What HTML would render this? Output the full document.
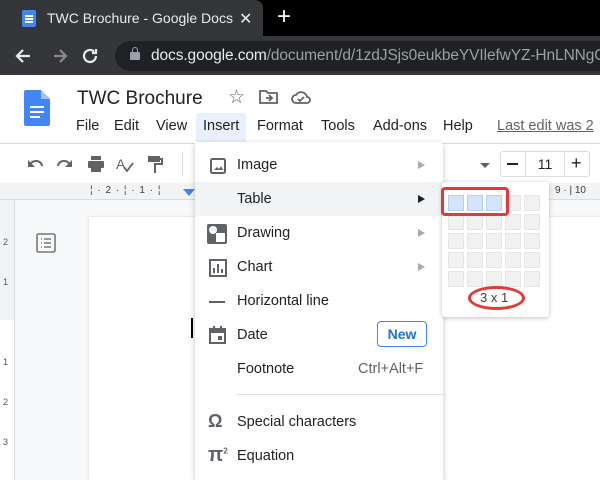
<!DOCTYPE html>
<html><head><style>
*{margin:0;padding:0;box-sizing:border-box}
html,body{width:600px;height:480px;overflow:hidden}
body{position:relative;font-family:"Liberation Sans",Arial,sans-serif;background:#fff}
#w{position:absolute;left:0;top:0;width:600px;height:480px;overflow:hidden}
.a{position:absolute}
.mi{position:absolute;left:0;width:248px;height:34px;font-size:14.5px;color:#202124}
.mi .t{position:absolute;left:42px;top:9px}
.mi .ar{position:absolute;left:223px;top:13px;width:0;height:0;border-left:7px solid #aaa;border-top:4.5px solid transparent;border-bottom:4.5px solid transparent}
.cell{position:absolute;width:16px;height:16px;background:#f1f1f1;border:1px solid #e6e6e6}
.cell.s{background:#d6e4fb;border-color:#b8cff5}
</style></head><body><div id="w">
<!-- tab bar -->
<div class="a" style="left:0;top:0;width:600px;height:36px;background:#000"></div>
<div class="a" style="left:0;top:0;width:263px;height:36px;background:#35363a;border-radius:0 8px 0 0"></div>
<div class="a" style="left:22px;top:10px;width:14px;height:17px;background:#4285f4;border-radius:2px"></div>
<div class="a" style="left:25px;top:15px;width:8px;height:1.5px;background:#fff;box-shadow:0 3px #fff,0 6px #fff"></div>
<div class="a" style="left:47px;top:10px;font-size:14px;color:#e8eaed;white-space:nowrap">TWC Brochure - Google Docs</div>
<div class="a" style="left:239px;top:9px;font-size:16px;color:#e8eaed">✕</div>
<div class="a" style="left:277px;top:3px;font-size:24px;color:#fff">+</div>
<!-- address row -->
<div class="a" style="left:0;top:36px;width:600px;height:39px;background:#35363a"></div>
<div class="a" style="left:115px;top:41px;width:485px;height:30px;background:#202124;border-radius:15px 0 0 15px;overflow:hidden">
<div class="a" style="left:15px;top:11px;width:10px;height:8px;background:#9aa0a6;border-radius:1px"></div>
<div class="a" style="left:17px;top:6px;width:6px;height:7px;border:1.5px solid #9aa0a6;border-bottom:none;border-radius:3px 3px 0 0"></div>
<div class="a" style="left:36px;top:6px;font-size:15.5px;color:#9aa0a6;white-space:nowrap;letter-spacing:-0.1px"><span style="color:#e8eaed">docs.google.com</span>/document/d/1zdJSjs0eukbeYVIlefwYZ-HnLNNgOkc</div>
</div>
<svg class="a" style="left:10px;top:44px" width="90" height="24" viewBox="0 0 90 24" fill="none" stroke-width="2.2">
<path d="M20 12H7M13 6L7 12l6 6" stroke="#e8eaed"/>
<path d="M44 12h12M50 6l6 6-6 6" stroke="#888"/>
<path d="M86 12a6 6 0 1 1-2-4.5" stroke="#e8eaed"/><path d="M86 5v4h-4" stroke="#e8eaed"/>
</svg>
<!-- docs header -->
<svg class="a" style="left:24px;top:90px" width="26" height="36" viewBox="0 0 26 36"><path d="M2 0h15l9 9v25a2 2 0 0 1-2 2H2a2 2 0 0 1-2-2V2a2 2 0 0 1 2-2z" fill="#4285f4"/><path d="M17 0v9h9z" fill="#a1c2fa"/><path d="M6 17h14M6 22h14M6 27h10" stroke="#fff" stroke-width="2"/></svg>
<div class="a" style="left:77px;top:88px;font-size:19px;color:#202124">TWC Brochure</div>
<div class="a" style="left:228px;top:86px;font-size:19px;color:#5f6368">☆</div>
<svg class="a" style="left:259px;top:89px" width="20" height="16" viewBox="0 0 20 16" fill="none" stroke="#5f6368" stroke-width="1.8"><path d="M1 2h6l2 2h9v10H1z"/><path d="M7 9h6M10 6l3 3-3 3"/></svg>
<svg class="a" style="left:291px;top:89px" width="20" height="16" viewBox="0 0 20 16" fill="none" stroke="#5f6368" stroke-width="1.8"><path d="M5 14a4 4 0 0 1 0-8 6 6 0 0 1 11 2 3 3 0 0 1 0 6z"/><path d="M7 10l2 2 4-4"/></svg>
<div class="a" style="left:196px;top:113px;width:50px;height:30px;background:#e8f0fe;border-radius:3px 3px 0 0"></div>
<div class="a" style="left:76px;top:118px;width:524px;height:20px;overflow:hidden;font-size:14.5px;color:#202124;white-space:nowrap">
<span style="position:absolute;left:0">File</span><span style="position:absolute;left:38px">Edit</span><span style="position:absolute;left:80px">View</span><span style="position:absolute;left:127px">Insert</span><span style="position:absolute;left:181px">Format</span><span style="position:absolute;left:245px">Tools</span><span style="position:absolute;left:297px">Add-ons</span><span style="position:absolute;left:367px">Help</span><span style="position:absolute;left:421px;color:#5f6368;text-decoration:underline">Last edit was 2</span></div>
<div class="a" style="left:0;top:143px;width:600px;height:1px;background:#dadce0"></div>
<!-- toolbar icons -->
<svg class="a" style="left:26px;top:154px" width="150" height="20" viewBox="0 0 150 20" fill="#5f6368" stroke="#5f6368">
<path d="M4 12a6 5 0 0 1 12 0" fill="none" stroke-width="2"/><path d="M2 6v7h7z" stroke="none"/>
<path d="M44 12a6 5 0 0 0-12 0" fill="none" stroke-width="2"/><path d="M46 6v7h-7z" stroke="none"/>
<rect x="62" y="7" width="16" height="7" rx="1" stroke="none"/><rect x="65" y="2" width="10" height="4" stroke="none"/><rect x="65" y="12" width="10" height="6" stroke="none"/>
<text x="90" y="15" font-size="14" font-family="Liberation Sans" stroke="none">A</text><path d="M98 13l3 4 6-8" fill="none" stroke-width="1.8"/>
<rect x="122" y="2" width="12" height="6" stroke="none"/><path d="M134 5h2v5h-7v9" fill="none" stroke-width="2"/>
</svg>
<div class="a" style="left:182px;top:152px;width:1px;height:24px;background:#dadce0"></div>
<div class="a" style="left:480px;top:163px;border-top:5px solid #5f6368;border-left:5px solid transparent;border-right:5px solid transparent"></div>
<div class="a" style="left:500px;top:151px;width:90px;height:26px;border:1px solid #dadce0;border-radius:3px"></div>
<div class="a" style="left:525px;top:151px;width:40px;height:26px;border-left:1px solid #dadce0;border-right:1px solid #dadce0;text-align:center;font-size:14px;line-height:26px;color:#202124">11</div>
<div class="a" style="left:507px;top:163px;width:11px;height:2px;background:#202124"></div>
<div class="a" style="left:571px;top:153px;font-size:18px;color:#202124">+</div>
<!-- ruler -->
<div class="a" style="left:0;top:183px;width:600px;height:17px;background:#f1f3f4;border-bottom:1px solid #dadce0"></div>
<div class="a" style="left:90px;top:185px;font-size:10px;color:#3c4043;white-space:nowrap;letter-spacing:1px">¦ · 2 · ¦ · 1 · ¦</div>
<div class="a" style="left:183px;top:189px;border-top:7px solid #4285f4;border-left:6px solid transparent;border-right:6px solid transparent"></div>
<div class="a" style="left:555px;top:185px;font-size:10px;color:#3c4043;white-space:nowrap">9 · | 10</div>
<!-- canvas -->
<div class="a" style="left:0;top:200px;width:15px;height:280px;background:#fff;border-right:1px solid #dadce0"></div>
<div class="a" style="left:0;top:200px;width:14px;height:120px;background:#f1f3f4"></div>
<div class="a" style="left:3px;top:222px;font-size:9px;color:#555;line-height:40px">2<br>1<br><br>1<br>2<br>3</div>
<div class="a" style="left:15px;top:200px;width:585px;height:280px;background:#f8f9fa"></div>
<div class="a" style="left:89px;top:217px;width:511px;height:263px;background:#fff;box-shadow:0 0 2px #ccc"></div>
<svg class="a" style="left:36px;top:233px" width="20" height="20" viewBox="0 0 20 20" fill="none" stroke="#777" stroke-width="1.6"><rect x="1" y="1" width="18" height="18" rx="1.5"/><path d="M5 6h1M8 6h7M5 10h1M8 10h7M5 14h1M8 14h7"/></svg>
<div class="a" style="left:191px;top:318px;width:2px;height:20px;background:#000"></div>
<!-- menu -->
<div class="a" style="left:195px;top:142px;width:248px;height:338px;background:#fff;box-shadow:0 2px 6px rgba(0,0,0,.25);border-radius:0 4px 0 0">
<div class="mi" style="top:6px"><svg class="a" style="left:15px;top:10px" width="16" height="16" viewBox="0 0 16 16"><rect x="1" y="1" width="14" height="14" rx="1.5" fill="none" stroke="#5f6368" stroke-width="2"/><path d="M4 12l3-3 2 2 2-3 2 4z" fill="#5f6368"/></svg><span class="t">Image</span><span class="ar"></span></div>
<div class="mi" style="top:40px;background:#f1f3f4"><span class="t">Table</span><span class="ar" style="border-left-color:#202124"></span></div>
<div class="mi" style="top:74px"><svg class="a" style="left:12px;top:8px" width="20" height="20" viewBox="0 0 20 20"><rect x="0" y="0" width="20" height="20" rx="2" fill="#5f6368"/><circle cx="6" cy="6" r="4" fill="#fff"/><rect x="9" y="9" width="9" height="9" fill="#fff"/></svg><span class="t">Drawing</span><span class="ar"></span></div>
<div class="mi" style="top:108px"><svg class="a" style="left:14px;top:9px" width="18" height="18" viewBox="0 0 18 18" fill="none" stroke="#5f6368" stroke-width="2"><rect x="1" y="1" width="16" height="16"/><path d="M5 14V9M9 14V5M13 14v-4"/></svg><span class="t">Chart</span><span class="ar"></span></div>
<div class="mi" style="top:142px"><div class="a" style="left:14px;top:17px;width:16px;height:2px;background:#5f6368"></div><span class="t">Horizontal line</span></div>
<div class="mi" style="top:176px"><svg class="a" style="left:14px;top:8px" width="17" height="18" viewBox="0 0 17 18"><rect x="1" y="3" width="15" height="14" fill="none" stroke="#5f6368" stroke-width="2"/><rect x="1" y="3" width="15" height="4" fill="#5f6368"/><rect x="4" y="0" width="2" height="4" fill="#5f6368"/><rect x="11" y="0" width="2" height="4" fill="#5f6368"/><rect x="9" y="10" width="4" height="4" fill="#5f6368"/></svg><span class="t">Date</span>
<div class="a" style="left:182px;top:3px;width:50px;height:26px;border:1px solid #4285f4;border-radius:4px;color:#1a73e8;font-weight:bold;font-size:14px;text-align:center;line-height:24px">New</div></div>
<div class="mi" style="top:210px"><span class="t">Footnote</span><span class="a" style="left:163px;top:9px;color:#5f6368">Ctrl+Alt+F</span></div>
<div class="a" style="left:42px;top:252px;width:206px;height:1px;background:#dadce0"></div>
<div class="mi" style="top:263px"><span class="a" style="left:13px;top:6px;font-size:18px;color:#5f6368;font-weight:bold">Ω</span><span class="t">Special characters</span></div>
<div class="mi" style="top:297px"><span class="a" style="left:13px;top:5px;font-size:20px;color:#5f6368;font-weight:bold">π<sup style="font-size:8px">2</sup></span><span class="t">Equation</span></div>
</div>
<!-- submenu -->
<div class="a" style="left:442px;top:182px;width:107px;height:135px;background:#fff;box-shadow:0 1px 5px rgba(0,0,0,.25);border-radius:3px"></div>
<div class="cell s" style="left:448px;top:195px"></div><div class="cell s" style="left:467px;top:195px"></div><div class="cell s" style="left:486px;top:195px"></div><div class="cell" style="left:505px;top:195px"></div><div class="cell" style="left:524px;top:195px"></div>
<div class="cell" style="left:448px;top:214px"></div><div class="cell" style="left:467px;top:214px"></div><div class="cell" style="left:486px;top:214px"></div><div class="cell" style="left:505px;top:214px"></div><div class="cell" style="left:524px;top:214px"></div>
<div class="cell" style="left:448px;top:233px"></div><div class="cell" style="left:467px;top:233px"></div><div class="cell" style="left:486px;top:233px"></div><div class="cell" style="left:505px;top:233px"></div><div class="cell" style="left:524px;top:233px"></div>
<div class="cell" style="left:448px;top:252px"></div><div class="cell" style="left:467px;top:252px"></div><div class="cell" style="left:486px;top:252px"></div><div class="cell" style="left:505px;top:252px"></div><div class="cell" style="left:524px;top:252px"></div>
<div class="cell" style="left:448px;top:271px"></div><div class="cell" style="left:467px;top:271px"></div><div class="cell" style="left:486px;top:271px"></div><div class="cell" style="left:505px;top:271px"></div><div class="cell" style="left:524px;top:271px"></div>
<div class="a" style="left:441px;top:187px;width:68px;height:29px;border:3px solid #e53935;border-radius:4px"></div>
<div class="a" style="left:468px;top:286px;width:57px;height:24px;border:3px solid #e53935;border-radius:50%"></div>
<div class="a" style="left:480px;top:290px;font-size:13px;color:#3c4043">3 x 1</div>
</div></body></html>
